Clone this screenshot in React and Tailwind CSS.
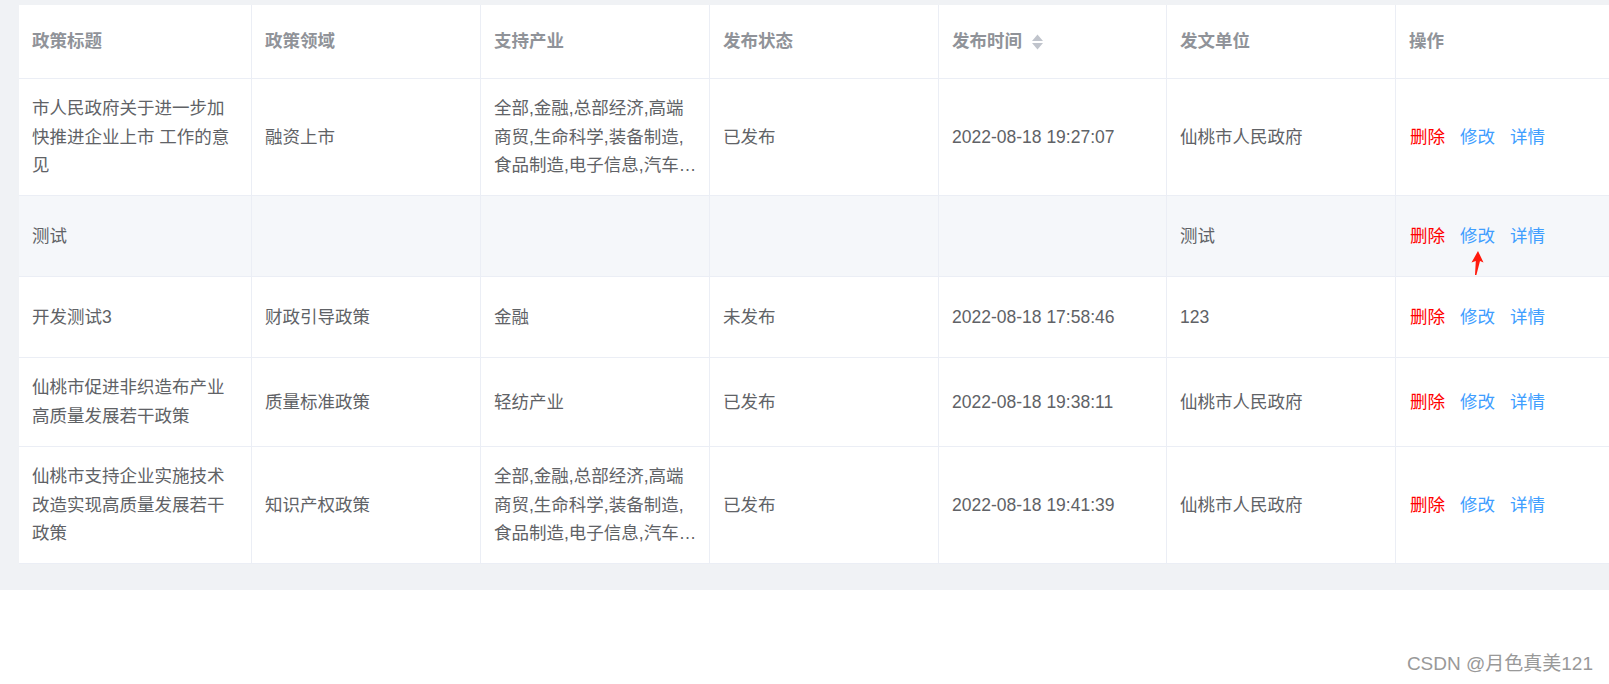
import React from "react";

const font = { fontFamily: '"Liberation Sans", "Noto Sans CJK SC", sans-serif' };

const headers = ["政策标题", "政策领域", "支持产业", "发布状态", "发布时间", "发文单位", "操作"];

const industryLines = ["全部,金融,总部经济,高端", "商贸,生命科学,装备制造,", "食品制造,电子信息,汽车…"];

const rows = [
  {
    h: "h-[117px]",
    title: ["市人民政府关于进一步加", "快推进企业上市 工作的意", "见"],
    field: "融资上市",
    industry: industryLines,
    status: "已发布",
    time: "2022-08-18 19:27:07",
    unit: "仙桃市人民政府",
  },
  {
    h: "h-[81px]",
    title: ["测试"],
    field: "",
    industry: [],
    status: "",
    time: "",
    unit: "测试",
    hover: true,
    arrow: true,
  },
  {
    h: "h-[81px]",
    title: ["开发测试3"],
    field: "财政引导政策",
    industry: ["金融"],
    status: "未发布",
    time: "2022-08-18 17:58:46",
    unit: "123",
  },
  {
    h: "h-[89px]",
    title: ["仙桃市促进非织造布产业", "高质量发展若干政策"],
    field: "质量标准政策",
    industry: ["轻纺产业"],
    status: "已发布",
    time: "2022-08-18 19:38:11",
    unit: "仙桃市人民政府",
  },
  {
    h: "h-[117px]",
    title: ["仙桃市支持企业实施技术", "改造实现高质量发展若干", "政策"],
    field: "知识产权政策",
    industry: industryLines,
    status: "已发布",
    time: "2022-08-18 19:41:39",
    unit: "仙桃市人民政府",
  },
];

function Lines({ lines }) {
  return (
    <div className="leading-[28.75px]">
      {lines.map((l, i) => (
        <div key={i} className="whitespace-nowrap">{l}</div>
      ))}
    </div>
  );
}

function SortIcon() {
  return (
    <svg width="13" height="16" viewBox="0 0 13 16" className="ml-[9px]">
      <path d="M6.5 0.5 L12 7 L1 7 Z" fill="#c0c4cc" />
      <path d="M6.5 15.5 L12 9 L1 9 Z" fill="#c0c4cc" />
    </svg>
  );
}

export default function App() {
  return (
    <div className="w-[1609px] h-[684px] bg-white overflow-hidden text-[17.5px] text-[#606266]" style={font}>
      <div className="bg-[#f0f2f5] pt-[5px] pl-[19px] pb-[26px]">
        <div className="bg-white grid grid-cols-[233px_229px_229px_229px_228px_229px_1fr]">
          {headers.map((h, i) => (
            <div
              key={h}
              className={"h-[74px] flex items-center px-[13px] border-b border-[#ebeef5] font-bold text-[#909399] " + (i < 6 ? "border-r" : "")}
            >
              {h}
              {h === "发布时间" && <SortIcon />}
            </div>
          ))}
          {rows.map((r, idx) => (
            <div key={idx} className="contents">
              {[
                <Lines lines={r.title} />,
                r.field,
                <Lines lines={r.industry} />,
                r.status,
                r.time,
                r.unit,
              ].map((c, i) => (
                <div
                  key={i}
                  className={r.h + " flex items-center px-[13px] border-b border-r border-[#ebeef5] " + (r.hover ? "bg-[#f5f7fa]" : "")}
                >
                  {c}
                </div>
              ))}
              <div className={r.h + " relative flex items-center pl-[14px] border-b border-[#ebeef5] " + (r.hover ? "bg-[#f5f7fa]" : "")}>
                <span className="text-[#ff0000]">删除</span>
                <span className="text-[#409eff] ml-[15px]">修改</span>
                <span className="text-[#409eff] ml-[15px]">详情</span>
                {r.arrow && (
                  <svg width="16" height="26" viewBox="0 0 16 26" className="absolute left-[73px] top-[54px]">
                    <path d="M9 1 L14.5 12.5 L11 11 L7.4 25 L6 25 L6.8 11 L2.5 12.5 Z" fill="#ff1a0d" />
                  </svg>
                )}
              </div>
            </div>
          ))}
        </div>
      </div>
      <div className="flex justify-end pr-[16px] pt-[60px] text-[#999999] text-[19px]">CSDN @月色真美121</div>
    </div>
  );
}
